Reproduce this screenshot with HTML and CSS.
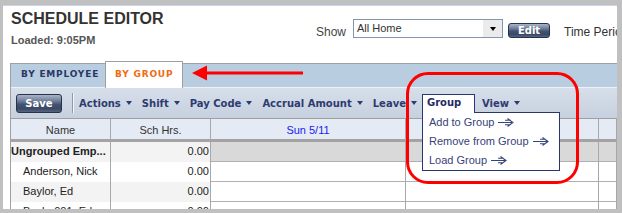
FILE: index.html
```html
<!DOCTYPE html>
<html>
<head>
<meta charset="utf-8">
<title>Schedule Editor</title>
<link rel="stylesheet" href="styles.css">
</head>
<body>
<div class="frame">
  <div class="top">
    <div class="titles">
      <h1 class="title">SCHEDULE EDITOR</h1>
      <div class="loaded">Loaded: 9:05PM</div>
    </div>
    <div class="controls">
      <span class="show-label">Show</span>
      <div class="select"><span class="select-text">All Home</span><span class="select-btn"></span></div>
      <div class="btn edit">Edit</div>
      <span class="time">Time Period</span>
    </div>
  </div>
  <div class="panel">
    <div class="tabs">
      <div class="tab">BY EMPLOYEE</div>
      <div class="tab active">BY GROUP</div>
    </div>
    <div class="toolbar">
      <div class="btn save">Save</div>
      <span class="sep"></span>
      <div class="menu-item">Actions<span class="caret"></span></div>
      <div class="menu-item">Shift<span class="caret"></span></div>
      <div class="menu-item">Pay Code<span class="caret"></span></div>
      <div class="menu-item">Accrual Amount<span class="caret"></span></div>
      <div class="menu-item leave">Leave<span class="caret"></span></div>
      <div class="group">Group
        <div class="dropdown">
          <div class="dd-item">Add to Group<svg class="go" width="16" height="9" viewBox="0 0 16 9"><path d="M0 4.5H14M7 2.2H12.5M7 6.8H12.5M9.5 0.5L15 4.5L9.5 8.5" fill="none" stroke="#36427a" stroke-width="1.1"/></svg></div>
          <div class="dd-item">Remove from Group<svg class="go" width="16" height="9" viewBox="0 0 16 9"><path d="M0 4.5H14M7 2.2H12.5M7 6.8H12.5M9.5 0.5L15 4.5L9.5 8.5" fill="none" stroke="#36427a" stroke-width="1.1"/></svg></div>
          <div class="dd-item">Load Group<svg class="go" width="16" height="9" viewBox="0 0 16 9"><path d="M0 4.5H14M7 2.2H12.5M7 6.8H12.5M9.5 0.5L15 4.5L9.5 8.5" fill="none" stroke="#36427a" stroke-width="1.1"/></svg></div>
        </div>
      </div>
      <div class="menu-item">View<span class="caret"></span></div>
    </div>
    <div class="grid">
      <div class="grid-row hdr">
        <div class="c">Name</div>
        <div class="c">Sch Hrs.</div>
        <div class="c day-link">Sun 5/11</div>
        <div class="c"></div>
        <div class="c"></div>
      </div>
      <div class="grid-row group-row alt">
        <div class="c name strong">Ungrouped Emp...</div>
        <div class="c hrs">0.00</div>
        <div class="c day"></div>
        <div class="c day"></div>
        <div class="c day"></div>
      </div>
      <div class="grid-row">
        <div class="c name">Anderson, Nick</div>
        <div class="c hrs">0.00</div>
        <div class="c day"></div>
        <div class="c day"></div>
        <div class="c day"></div>
      </div>
      <div class="grid-row alt">
        <div class="c name">Baylor, Ed</div>
        <div class="c hrs">0.00</div>
        <div class="c day"></div>
        <div class="c day"></div>
        <div class="c day"></div>
      </div>
      <div class="grid-row">
        <div class="c name">Baylor001, Ed</div>
        <div class="c hrs">0.00</div>
        <div class="c day"></div>
        <div class="c day"></div>
        <div class="c day"></div>
      </div>
    </div>
  </div>
  <svg class="red-arrow" width="115" height="16" viewBox="0 0 115 16"><polygon points="0,8 15,0.5 15,15.5" fill="#ff0000"/><rect x="14" y="6.5" width="97" height="3" fill="#ff0000"/></svg>
  <div class="red-ring"></div>
</div>
</body>
</html>
```
FILE: styles.css
```css
* { box-sizing: border-box; }
html, body { margin: 0; padding: 0; }
body {
  background: #c0c0c0;
  width: 622px;
  height: 213px;
  overflow: hidden;
  font-family: "Liberation Sans", Arial, sans-serif;
}
.frame {
  position: relative;
  margin: 5px 0 0 3px;
  width: 614px;
  height: 204px;
  background: #fff;
  border-top: 1px solid #c6d6ea;
  padding-left: 7px;
  overflow: hidden;
}
.top { display: flex; height: 57px; }
.titles { width: 306px; flex: none; padding: 4px 0 0 1px; }
.title {
  margin: 0;
  font: bold 16px/18px "Liberation Sans", Arial, sans-serif;
  color: #333;
}
.loaded {
  margin-top: 6px;
  font: bold 11px/13px "Liberation Sans", Arial, sans-serif;
  color: #555;
}
.controls {
  display: flex;
  align-items: flex-start;
  margin-top: 13px;
  white-space: nowrap;
  flex: none;
}
.show-label {
  font: 12px/14px "Liberation Sans", Arial, sans-serif;
  color: #444;
  margin: 6px 7px 0 0;
}
.select {
  width: 150px;
  height: 19px;
  border: 1px solid #8296ae;
  display: flex;
}
.select-text {
  flex: 1;
  font: 11px/16px "Liberation Sans", Arial, sans-serif;
  padding-left: 3px;
  color: #333;
}
.select-btn {
  width: 19px;
  background: #ebebeb;
  display: flex;
  align-items: center;
  justify-content: center;
}
.select-btn::before {
  content: "";
  border-style: solid;
  border-width: 4px 3.5px 0;
  border-color: #000 transparent transparent;
}
.btn {
  border: 1px solid #27324d;
  border-radius: 3px;
  background: linear-gradient(#aab4c6 0%, #6f7e9a 35%, #44536f 55%, #3b4966 80%, #56647f 100%);
  color: #fff;
  font: bold 10px "DejaVu Sans", sans-serif;
  text-align: center;
  flex: none;
}
.edit { width: 42px; height: 15px; line-height: 13px; margin: 4px 0 0 5px; }
.time {
  margin: 6px 0 0 14px;
  font: 12px/14px "Liberation Sans", Arial, sans-serif;
  color: #333;
}
.panel { border-left: 1px solid #a0a0a0; }
.tabs {
  display: flex;
  height: 25px;
  background: #b9cde1;
  border-top: 1px solid #a0a0a0;
  border-bottom: 1px solid #eef2f7;
}
.tab {
  font: bold 9px/21px "DejaVu Sans", sans-serif;
  letter-spacing: 0.8px;
  color: #2b3766;
  padding: 0 6px 0 10px;
}
.tab.active {
  background: #fff;
  color: #f26b10;
  border: 1px solid #a0a0a0;
  border-bottom: none;
  margin: -3px 0 -1px;
  padding: 2px 9px 0;
}
.toolbar {
  display: flex;
  align-items: center;
  height: 31px;
  border-bottom: 1px solid #a0a0a0;
  background: linear-gradient(#d7dfea, #c6d0de);
  padding-left: 5px;
  font: bold 10px "DejaVu Sans", sans-serif;
  color: #2e3b70;
  white-space: nowrap;
}
.save { width: 46px; height: 19px; line-height: 17px; }
.sep {
  width: 2px;
  height: 20px;
  margin: 0 5px 0 10px;
  border-left: 1px solid #8d9ab0;
  border-right: 1px solid #f3f6fa;
}
.menu-item { display: flex; align-items: center; margin-right: 10px; }
.menu-item.leave { margin-right: 5px; }
.caret {
  width: 0;
  height: 0;
  border-style: solid;
  border-width: 4px 3px 0;
  border-color: #2e3b70 transparent transparent;
  margin-left: 5px;
}
.group {
  position: relative;
  align-self: flex-start;
  margin: 6px 7px 0 0;
  height: 18px;
  width: 53px;
  border: 1px solid #2a3670;
  border-bottom: none;
  background: #fff;
  padding-left: 4px;
  line-height: 16px;
  color: #1f2b66;
}
.group::after {
  content: "";
  position: absolute;
  left: 0;
  right: 0;
  bottom: -1px;
  height: 1px;
  background: #fff;
  z-index: 3;
}
.dropdown {
  position: absolute;
  top: 100%;
  left: -1px;
  width: 138px;
  border: 1px solid #2a3670;
  background: #fff;
  z-index: 2;
  font: normal 11px/19px "Liberation Sans", Arial, sans-serif;
  color: #36427a;
}
.dd-item {
  display: flex;
  align-items: center;
  height: 19px;
  padding-left: 6px;
}
.go { margin-left: 4px; }
.grid-row {
  display: grid;
  grid-template-columns: 100px 100px 195px 193px 1fr;
}
.c {
  height: 20px;
  border-right: 1px solid #a8a8a8;
  font: 11px/19px "Liberation Sans", Arial, sans-serif;
  color: #222;
  white-space: nowrap;
  overflow: hidden;
}
.hdr .c {
  height: 23px;
  border-bottom: 3px solid #a3a3a3;
  background: #e5ebf4;
  text-align: center;
  line-height: 18px;
  padding-top: 2px;
  color: #333;
}
.hdr .day-link { color: #1a1aee; }
.name { padding-left: 12px; }
.name.strong { padding-left: 0; font-weight: bold; }
.hrs { text-align: right; padding-right: 1px; }
.alt .name, .alt .hrs { background: #f3f3f3; }
.day { border-bottom: 1px solid #b0b0b0; }
.group-row .day { background: #d9d9d9; }
.red-arrow { position: absolute; left: 189px; top: 59px; }
.red-ring {
  position: absolute;
  left: 403px;
  top: 66px;
  width: 173px;
  height: 112px;
  border: 3px solid #ff0000;
  border-radius: 22px;
  z-index: 5;
}
```
